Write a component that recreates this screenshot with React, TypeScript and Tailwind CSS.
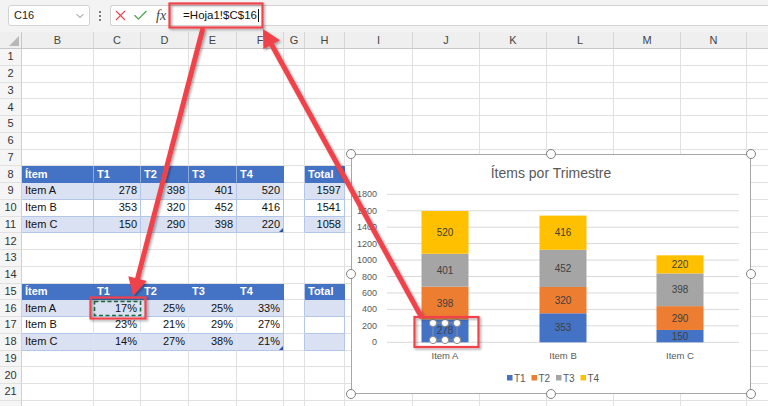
import React from "react";
import { X, Check, ChevronDown } from "lucide-react";

const COLS =
  "grid-cols-[22px_72px_47px_48px_48px_47px_21px_40px_68px_67px_67px_67px_67px_66px_66px]";
const LETTERS = ["B", "C", "D", "E", "F", "G", "H", "I", "J", "K", "L", "M", "N", ""];

const TABLES = [
  {
    top: 8,
    sep: true,
    rows: [
      ["Ítem", "T1", "T2", "T3", "T4", "Total"],
      ["Item A", "278", "398", "401", "520", "1597"],
      ["Item B", "353", "320", "452", "416", "1541"],
      ["Item C", "150", "290", "398", "220", "1058"],
    ],
  },
  {
    top: 15,
    sep: false,
    rows: [
      ["Ítem", "T1", "T2", "T3", "T4", "Total"],
      ["Item A", "17%", "25%", "25%", "33%", ""],
      ["Item B", "23%", "21%", "29%", "27%", ""],
      ["Item C", "14%", "27%", "38%", "21%", ""],
    ],
  },
];

const DATA = [
  { name: "Item A", v: [278, 398, 401, 520] },
  { name: "Item B", v: [353, 320, 452, 416] },
  { name: "Item C", v: [150, 290, 398, 220] },
];
const COLORS = ["#4472c4", "#ed7d31", "#a5a5a5", "#ffc000"];
const Y0 = 188.3;
const K = 148 / 1800;
const CENTERS = [94, 212, 329];

function GridCell({ r, c }: { r: number; c: number }) {
  const table = TABLES.find((t) => r >= t.top && r < t.top + 4);
  const idx = c <= 5 ? c - 1 : c === 7 ? 5 : -1;

  if (!table || idx < 0) {
    const edge = table && c === 6 ? "border-r-[#b4c6e7]" : "";
    return <div className={`border-r border-b border-[#e1e1e1] ${edge}`} />;
  }

  const i = r - table.top;
  const text = table.rows[i][idx];
  const last = idx === 4 || idx === 5;

  if (i === 0) {
    const sep = table.sep && !last ? "border-r-[#8eaadb]" : "border-r-[#4472c4]";
    return (
      <div
        className={`bg-[#4472c4] border-r border-b border-[#4472c4] ${sep} text-white font-bold text-[11px] pl-[3px] flex items-center leading-none`}
      >
        {text}
      </div>
    );
  }

  const band = i % 2 === 1 ? "bg-[#d9e1f2]" : "bg-white";
  const vline = table.sep || last ? "border-r-[#b4c6e7]" : "border-r-[#dde4f2]";
  const align = idx === 0 ? "justify-start pl-[3px]" : "justify-end pr-[3px]";
  return (
    <div
      className={`relative ${band} border-r border-b border-[#b4c6e7] ${vline} ${align} flex items-center text-[11px] text-[#111] leading-none`}
    >
      {text}
      {i === 3 && idx === 4 && (
        <div className="absolute right-0 bottom-0 w-0 h-0 border-l-[4px] border-l-transparent border-b-[4px] border-b-[#2f5597]" />
      )}
    </div>
  );
}

function Row({ r, label = true }: { r: number; label?: boolean }) {
  return (
    <div className={`grid ${COLS} h-[16.75px]`}>
      <div className="bg-[#f5f5f5] border-r border-b border-r-[#d0d0d0] border-b-[#e1e1e1] flex items-center justify-center text-[11px] text-[#333] leading-none">
        {label ? r : ""}
      </div>
      {LETTERS.map((_, i) => (
        <GridCell key={i} r={r} c={i + 1} />
      ))}
    </div>
  );
}

function FormulaBar() {
  return (
    <div className="h-[32px] bg-[#f3f3f3] flex items-start pt-[5px] pl-[8px]">
      <div className="w-[82px] h-[21px] bg-white border border-[#d4d4d4] rounded-[3px] flex items-center justify-between pl-[5px] pr-[3px]">
        <span className="text-[11px] text-[#222]">C16</span>
        <ChevronDown size={12} strokeWidth={1.5} color="#555" />
      </div>
      <div className="w-[20px] h-[21px] flex flex-col items-center justify-center gap-[2px]">
        <div className="w-[2px] h-[2px] rounded-full bg-[#555]" />
        <div className="w-[2px] h-[2px] rounded-full bg-[#555]" />
        <div className="w-[2px] h-[2px] rounded-full bg-[#555]" />
      </div>
      <div className="flex-1 h-[21px] bg-white border border-r-0 border-[#d4d4d4] rounded-l-[3px] flex items-center">
        <X size={17} strokeWidth={1.6} color="#e8434a" className="ml-[1px]" />
        <Check size={17} strokeWidth={1.6} color="#43a047" className="ml-[3px]" />
        <span className="ml-[7px] font-['Liberation_Serif',serif] italic text-[14px] text-[#444] leading-none">
          fx
        </span>
        <span className="ml-[17px] text-[11.5px] text-[#111] leading-none">=Hoja1!$C$16</span>
        <span className="ml-[1px] w-px h-[13px] bg-[#111]" />
      </div>
    </div>
  );
}

function ColumnHeader() {
  return (
    <div className={`grid ${COLS} h-[17px] bg-[#efefef]`}>
      <div className="border-r border-b border-[#c8c8c8] flex items-end justify-end p-[2px]">
        <svg width="10" height="10" viewBox="0 0 10 10">
          <polygon points="10,0 10,10 0,10" fill="#b8b8b8" />
        </svg>
      </div>
      {LETTERS.map((l, i) => (
        <div
          key={i}
          className="border-r border-b border-r-[#d6d6d6] border-b-[#c8c8c8] flex items-center justify-center text-[11px] text-[#444] leading-none"
        >
          {l}
        </div>
      ))}
    </div>
  );
}

function Chart() {
  const handles = [
    [0, 0],
    [200, 0],
    [400, 0],
    [0, 120],
    [400, 120],
    [0, 240],
    [200, 240],
    [400, 240],
  ];
  return (
    <div className="absolute left-[351px] top-[154px] w-[400px] h-[240px] bg-white border border-[#a6a6a6]">
      <svg width="400" height="240" className="absolute left-[-1px] top-[-1px]" fontFamily="Liberation Sans, Arial, sans-serif">
        <text x="200" y="24" textAnchor="middle" fontSize="14" fill="#595959">
          Ítems por Trimestre
        </text>
        {Array.from({ length: 10 }, (_, i) => {
          const y = Y0 - i * 200 * K;
          return (
            <g key={i}>
              <line x1="36" x2="388" y1={y} y2={y} stroke="#d9d9d9" strokeWidth="1" />
              <text x="26" y={y + 3} textAnchor="end" fontSize="9" fill="#595959">
                {i * 200}
              </text>
            </g>
          );
        })}
        {DATA.map((d, j) => {
          let acc = 0;
          return (
            <g key={d.name}>
              {d.v.map((v, s) => {
                const y1 = Y0 - acc * K;
                acc += v;
                const y2 = Y0 - acc * K;
                return (
                  <g key={s}>
                    <rect x={CENTERS[j] - 23.5} y={y2} width="47" height={y1 - y2} fill={COLORS[s]} />
                    <text x={CENTERS[j]} y={(y1 + y2) / 2 + 3.5} textAnchor="middle" fontSize="10" fill="#404040">
                      {v}
                    </text>
                  </g>
                );
              })}
              <text x={CENTERS[j]} y="205" textAnchor="middle" fontSize="9.5" fill="#595959">
                {d.name}
              </text>
            </g>
          );
        })}
        {["T1", "T2", "T3", "T4"].map((t, i) => (
          <g key={t}>
            <rect x={156 + i * 24.5} y="221" width="5.5" height="5.5" fill={COLORS[i]} />
            <text x={163 + i * 24.5} y="227.5" fontSize="10" fill="#595959">
              {t}
            </text>
          </g>
        ))}
        <rect x="82" y="169" width="24" height="17" fill="none" stroke="#9a9a9a" strokeWidth="0.8" />
        {[82, 94, 106].map((x) =>
          [169, 186].map((y) => (
            <circle key={`${x}-${y}`} cx={x} cy={y} r="3.6" fill="#fff" stroke="#8a8a8a" strokeWidth="1" />
          ))
        )}
      </svg>
      {handles.map(([x, y]) => (
        <div
          key={`${x}-${y}`}
          className="absolute w-[10px] h-[10px] rounded-full bg-white border border-[#7f7f7f]"
          style={{ left: x - 6, top: y - 6 }}
        />
      ))}
    </div>
  );
}

function arrow(x1: number, y1: number, x2: number, y2: number) {
  const dx = x2 - x1;
  const dy = y2 - y1;
  const len = Math.hypot(dx, dy);
  const ux = dx / len;
  const uy = dy / len;
  const h = 18;
  const w = 9.5;
  const bx = x2 - ux * h;
  const by = y2 - uy * h;
  const px = -uy;
  const py = ux;
  return {
    line: { x1, y1, x2: bx + ux * 2, y2: by + uy * 2 },
    head: `${x2},${y2} ${bx + px * w},${by + py * w} ${bx - px * w},${by - py * w}`,
  };
}

function Annotations() {
  const a1 = arrow(203, 28, 133, 296);
  const a2 = arrow(422, 318, 263, 29);
  const red = "#f0434b";
  return (
    <svg className="absolute inset-0 pointer-events-none" width="768" height="406">
      <defs>
        <filter id="sh" x="-20%" y="-20%" width="140%" height="140%">
          <feDropShadow dx="1.5" dy="1.5" stdDeviation="1.2" floodColor="#000" floodOpacity="0.35" />
        </filter>
      </defs>
      <rect x="94.5" y="301.5" width="46" height="14" fill="none" stroke="#1e6b3a" strokeWidth="1.6" strokeDasharray="4 2.5" />
      <g filter="url(#sh)">
        <rect x="169.5" y="3.5" width="93" height="24" fill="none" stroke={red} strokeWidth="2.2" />
        <rect x="90.5" y="297.5" width="55" height="21" fill="none" stroke={red} strokeWidth="2.2" />
        <rect x="414.5" y="317" width="64" height="30" fill="none" stroke={red} strokeWidth="2.2" />
        {[a1, a2].map((a, i) => (
          <g key={i}>
            <line {...a.line} stroke={red} strokeWidth="5" />
            <polygon points={a.head} fill={red} />
          </g>
        ))}
      </g>
    </svg>
  );
}

export default function App() {
  return (
    <div className="relative w-[768px] h-[406px] overflow-hidden bg-white font-['Liberation_Sans',Arial,sans-serif]">
      <FormulaBar />
      <div className="w-[813px]">
        <ColumnHeader />
        {Array.from({ length: 21 }, (_, i) => (
          <Row key={i} r={i + 1} />
        ))}
        <Row r={22} label={false} />
      </div>
      <Chart />
      <Annotations />
    </div>
  );
}
